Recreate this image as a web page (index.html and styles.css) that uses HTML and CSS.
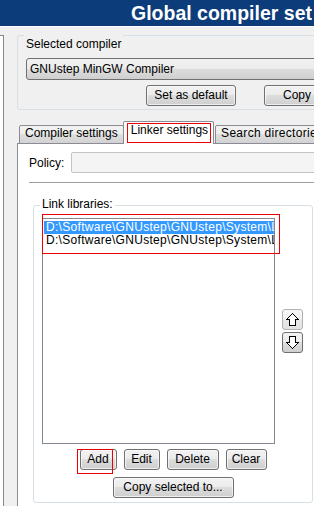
FILE: index.html
```html
<!DOCTYPE html>
<html>
<head>
<meta charset="utf-8">
<link rel="stylesheet" href="styles.css">
</head>
<body>
<div class="window">
  <div class="titlebar"><span class="title">Global compiler settings</span></div>
  <div class="main">
    <div class="sidebar"></div>
    <div class="content">
      <div class="group group-compiler">
        <span class="group-label">Selected compiler</span>
        <div class="combo">GNUstep MinGW Compiler</div>
        <div class="btn-row">
          <button class="btn btn-default">Set as default</button>
          <button class="btn btn-copy">Copy</button>
        </div>
      </div>
      <div class="tabs">
        <div class="tab">Compiler settings</div>
        <div class="tab tab-active"><span class="mark">Linker settings</span></div>
        <div class="tab tab-search">Search directories</div>
      </div>
      <div class="tab-panel">
        <div class="policy-row">
          <span class="policy-label">Policy:</span>
          <div class="policy-input"></div>
        </div>
        <div class="separator"></div>
        <div class="group group-libs">
          <span class="group-label">Link libraries:</span>
          <div class="libs-body">
            <div class="listbox">
              <div class="item selected">D:\Software\GNUstep\GNUstep\System\Library\Libraries\libobjc.dll.a</div>
              <div class="item">D:\Software\GNUstep\GNUstep\System\Library\Libraries\libgnustep-base.dll.a</div>
            </div>
            <div class="arrows">
              <button class="arrow-btn arrow-up" aria-label="Move up">
                <svg width="13" height="13" viewBox="0 0 13 13"><polygon points="6.5,0.5 12.5,6.5 9.5,6.5 9.5,12.5 3.5,12.5 3.5,6.5 0.5,6.5" fill="#fff" stroke="#000" stroke-width="1" shape-rendering="crispEdges"/></svg>
              </button>
              <button class="arrow-btn arrow-down" aria-label="Move down">
                <svg width="13" height="13" viewBox="0 0 13 13"><polygon points="3.5,0.5 9.5,0.5 9.5,6.5 12.5,6.5 6.5,12.5 0.5,6.5 3.5,6.5" fill="#fff" stroke="#000" stroke-width="1" shape-rendering="crispEdges"/></svg>
              </button>
            </div>
          </div>
          <div class="actions">
            <button class="btn btn-add">Add</button>
            <button class="btn btn-edit">Edit</button>
            <button class="btn btn-delete">Delete</button>
            <button class="btn btn-clear">Clear</button>
          </div>
          <div class="actions actions-second">
            <button class="btn btn-copysel">Copy selected to...</button>
          </div>
          <div class="annot annot-list"></div>
          <div class="annot annot-add"></div>
        </div>
      </div>
    </div>
  </div>
</div>
</body>
</html>
```
FILE: styles.css
```css
* { box-sizing: border-box; }
html, body { margin: 0; padding: 0; }
body {
  width: 314px;
  height: 506px;
  overflow: hidden;
  background: #f0f0f0;
  font-family: "Liberation Sans", Arial, sans-serif;
  font-size: 12px;
  color: #000;
}
.window { width: 314px; height: 506px; overflow: hidden; }

.titlebar {
  height: 27px;
  background: #0c3c7a;
  border-bottom: 1px solid #ffffff;
  padding: 1px 0 0 131px;
  white-space: nowrap;
  overflow: hidden;
}
.title {
  display: inline-block;
  width: 181px;
  overflow: hidden;
  vertical-align: top;
  color: #fff;
  font-weight: bold;
  font-size: 19.5px;
  line-height: 25px;
}

.main { display: flex; padding-top: 8px; height: 479px; }
.sidebar {
  flex: none;
  width: 4px;
  background: #fff;
  border-top: 1px solid #828790;
  border-right: 1px solid #828790;
}
.content { flex: none; width: 460px; margin-left: 13px; }

.group { border: 1px solid #d5dfe5; border-radius: 3px; }
.group-label {
  display: block;
  width: max-content;
  padding: 0 2px;
  margin-left: -2px;
  white-space: nowrap;
}

.group-compiler { padding: 0 0 3px 8px; }
.group-compiler .group-label { margin-top: -1px; line-height: 18px; background: #f0f0f0; }

.combo {
  margin-top: 5px;
  height: 22px;
  border: 1px solid #707070;
  border-radius: 3px;
  background: linear-gradient(#f2f2f2, #ebebeb 50%, #dddddd 50%, #cfcfcf);
  padding-left: 3px;
  line-height: 20px;
  white-space: nowrap;
}

.btn-row { display: flex; gap: 28px; margin-top: 5px; padding-left: 120px; }

.btn {
  flex: none;
  height: 21px;
  border: 1px solid #707070;
  border-radius: 3px;
  background: linear-gradient(#f2f2f2, #ebebeb 50%, #dddddd 50%, #cfcfcf);
  box-shadow: inset 0 0 0 1px rgba(252, 252, 252, 0.7);
  font: inherit;
  color: #000;
  padding: 0;
  line-height: 19px;
  text-align: center;
  white-space: nowrap;
}
.btn-default { width: 90px; }
.btn-copy { width: 66px; }

.tabs {
  display: flex;
  align-items: flex-end;
  height: 23px;
  margin-top: 11px;
  margin-bottom: -1px;
  padding-left: 2px;
  position: relative;
  z-index: 1;
}
.tab {
  flex: none;
  height: 19px;
  border: 1px solid #898c95;
  border-radius: 2px 2px 0 0;
  padding: 0 5px;
  line-height: 15px;
  background: linear-gradient(#f3f3f3, #ececec 50%, #dfdfdf 50%, #d2d2d2);
  white-space: nowrap;
}
.tab-active {
  height: 23px;
  border-bottom: none;
  background: #fff;
  margin-left: -1px;
  padding: 1px 2px 0 3px;
}
.tab-search { margin-left: 1px; letter-spacing: 0.3px; }
.mark {
  display: block;
  height: 20px;
  border: 1px solid #ee0000;
  padding: 0 2px 0 3px;
  line-height: 13px;
}

.tab-panel {
  border: 1px solid #898c95;
  background: #fff;
  padding: 8px 0 10px 11px;
}

.policy-row { display: flex; align-items: center; height: 21px; }
.policy-label { flex: none; width: 42px; padding-top: 1px; }
.policy-input {
  flex: 1;
  height: 21px;
  border: 1px solid #c3c3c3;
  border-radius: 2px;
  background: #f4f4f4;
}

.separator { margin-top: 9px; border-top: 1px solid #a0a0a0; }

.group-libs {
  position: relative;
  width: 280px;
  margin: 22px 0 0 4px;
  padding: 0 8px 4px 8px;
}
.group-libs .group-label { margin-top: -9px; line-height: 14px; background: #fff; }

.libs-body { display: flex; align-items: center; margin-top: 7px; }
.listbox {
  flex: none;
  width: 233px;
  height: 226px;
  border: 1px solid #828790;
  background: #fff;
  padding: 2px 0 0 1px;
  overflow: hidden;
}
.item {
  width: max-content;
  padding: 0 2px;
  line-height: 13px;
  letter-spacing: 0.3px;
  white-space: nowrap;
}
.item.selected { background: #3399ff; color: #fff; }

.arrows { display: flex; flex-direction: column; gap: 2px; margin-left: 7px; }
.arrow-btn {
  width: 21px;
  height: 21px;
  padding: 0;
  display: flex;
  align-items: center;
  justify-content: center;
  border-radius: 3px;
}
.arrow-up { border: 1px solid #adb2b5; background: linear-gradient(#f7f7f7, #f0f0f0 50%, #e8e8e8 50%, #e2e2e2); }
.arrow-down { border: 1px solid #707070; background: linear-gradient(#f2f2f2, #ebebeb 50%, #dddddd 50%, #cfcfcf); }
.arrow-btn svg { display: block; }

.actions { display: flex; justify-content: center; gap: 7px; margin-top: 5px; }
.actions-second { margin-top: 7px; }
.btn-add { width: 37px; }
.btn-edit { width: 36px; }
.btn-delete { width: 52px; }
.btn-clear { width: 41px; }
.btn-copysel { width: 121px; }

.annot { position: absolute; border: 1px solid #ee0000; pointer-events: none; }
.annot-list { left: 8px; top: 8px; width: 238px; height: 40px; }
.annot-add { left: 43px; top: 243px; width: 36px; height: 25px; }
```
